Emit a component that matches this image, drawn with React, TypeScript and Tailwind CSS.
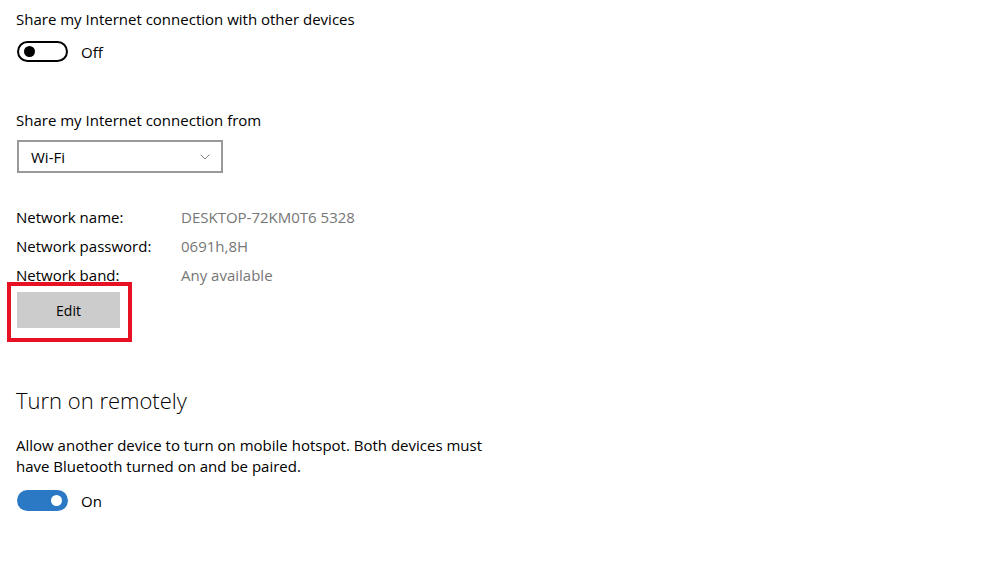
import { ChevronDown } from 'lucide-react';

function Toggle({ on, label }: { on: boolean; label: string }) {
  return (
    <div className="flex items-center gap-[13px]">
      {on ? (
        <div className="flex h-[21px] w-[51px] items-center justify-end rounded-full bg-[#2b78c5] pr-[6px]">
          <span className="h-[11px] w-[11px] rounded-full bg-white" />
        </div>
      ) : (
        <div className="flex h-[21px] w-[51px] items-center rounded-full border-[2px] border-black pl-[5px]">
          <span className="h-[11px] w-[11px] rounded-full bg-black" />
        </div>
      )}
      <span className="text-[15px] leading-[20px] text-black">{label}</span>
    </div>
  );
}

export default function App() {
  const rows = [
    ['Network name:', 'DESKTOP-72KM0T6 5328'],
    ['Network password:', '0691h,8H'],
    ['Network band:', 'Any available'],
  ];

  return (
    <div className="h-[563px] w-[1000px] overflow-hidden bg-white pl-[16px] font-['Open_Sans',sans-serif] text-black">
      <p className="mt-[9px] text-[15px] leading-[20px]">Share my Internet connection with other devices</p>
      <div className="mt-[12px] pl-[1px]">
        <Toggle on={false} label="Off" />
      </div>

      <p className="mt-[48px] text-[15px] leading-[20px]">Share my Internet connection from</p>
      <div className="ml-[1px] mt-[10px] flex h-[33px] w-[206px] items-center justify-between border-[2px] border-[#999999] pl-[12px] pr-[8px]">
        <span className="text-[15px] leading-[20px]">Wi-Fi</span>
        <ChevronDown className="h-[16px] w-[16px] text-[#666666]" strokeWidth={1.25} />
      </div>

      <div className="mt-[30px]">
        {rows.map(([k, v]) => (
          <div key={k} className="flex text-[15px] leading-[29px]">
            <span className="w-[165px]">{k}</span>
            <span className="text-[#767676]">{v}</span>
          </div>
        ))}
      </div>

      <div className="relative ml-[1px] mt-[2px] w-[103px]">
        <button className="flex h-[36px] w-[103px] items-center justify-center bg-[#cccccc] text-[14px] text-black">
          Edit
        </button>
        <div className="pointer-events-none absolute -bottom-[14px] -left-[10px] -right-[12px] -top-[10px] border-[4px] border-[#e81123]" />
      </div>

      <h2 className="mt-[58px] text-[22px] font-light leading-[28px]">Turn on remotely</h2>
      <p className="mt-[21px] text-[15px] leading-[21px]">
        Allow another device to turn on mobile hotspot. Both devices must
        <br />
        have Bluetooth turned on and be paired.
      </p>
      <div className="mt-[13px] pl-[1px]">
        <Toggle on={true} label="On" />
      </div>
    </div>
  );
}
